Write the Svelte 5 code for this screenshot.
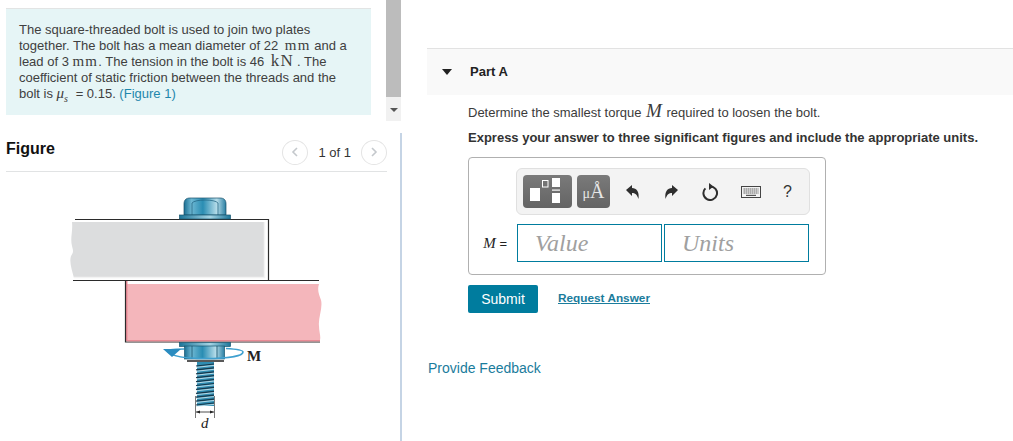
<script>
  const threads = Array.from({ length: 11 }, (_, i) => 364 + i * 3.9);
</script>

<div class="page">
  <section class="left">
    <div class="top">
      <div class="intro-wrap">
        <div class="intro">
          The square-threaded bolt is used to join two plates together. The bolt has a mean diameter of 22 <span class="unit gap">mm</span> and a lead of 3 <span class="unit">mm</span>. The tension in the bolt is 46 <span class="unit big gap">kN</span>. The coefficient of static friction between the threads and the bolt is <span class="mu">μ<sub>s</sub></span> = 0.15. <span class="link">(Figure 1)</span>
        </div>
      </div>
      <div class="scrollbar">
        <div class="thumb"></div>
        <div class="arrow-down"></div>
      </div>
    </div>
    <div class="figure">
      <div class="fig-head">
        <h2>Figure</h2>
        <div class="pager">
          <span class="circle"><svg viewBox="0 0 10 14" width="8" height="12"><path d="M7.5 2 L2.5 7 L7.5 12" /></svg></span>
          <span class="count">1 of 1</span>
          <span class="circle"><svg viewBox="0 0 10 14" width="8" height="12"><path d="M2.5 2 L7.5 7 L2.5 12" /></svg></span>
        </div>
      </div>
      <svg class="diagram" viewBox="60 172 280 269" width="280" height="269">
        <defs>
          <linearGradient id="steel" x1="0" x2="1" y1="0" y2="0">
            <stop offset="0" stop-color="#1b6f93" />
            <stop offset="0.18" stop-color="#6db7d2" />
            <stop offset="0.45" stop-color="#2a8db3" />
            <stop offset="0.78" stop-color="#b5dce9" />
            <stop offset="1" stop-color="#2a7fa3" />
          </linearGradient>
          <linearGradient id="flange" x1="0" x2="1" y1="0" y2="0">
            <stop offset="0" stop-color="#1c7599" />
            <stop offset="0.6" stop-color="#a6d5e5" />
            <stop offset="1" stop-color="#1c7599" />
          </linearGradient>
        </defs>

        <path d="M72 222 H264 V278 H74 C72 270 69 262 71 256 C74 252 73 250 72 246 C70 238 73 232 72 222Z" fill="#dcddde" />
        <path d="M264.5 222 V277.5 H74" fill="none" stroke="#f3f3f3" stroke-width="1.5" />
        <path d="M75 219.5 H268.5 V280" fill="none" stroke="#2b2b2b" stroke-width="1.2" />
        <path d="M73 280.5 H319" fill="none" stroke="#2b2b2b" stroke-width="1.2" />

        <path d="M127 284 H319 C317 290 319 295 321 300 C323 308 318 318 319 326 C319 332 321 336 320 340 H127Z" fill="#f4b6bb" />
        <rect x="126" y="281" width="1.5" height="60" fill="#ec8c97" />
        <path d="M125.5 280.5 V342 H320" fill="none" stroke="#2b2b2b" stroke-width="1.2" />
        <rect x="127" y="340" width="193" height="1.4" fill="#e98a95" />

        <path d="M184 215 V204 C184 200 186 198 190 198 H220 C224 198 226 200 226 204 V215Z" fill="url(#steel)" stroke="#174f68" stroke-width="0.7" />
        <path d="M192 215 V203 C195 199 215 199 218 203 V215" fill="none" stroke="#1d5f7c" stroke-width="0.7" />
        <rect x="179.5" y="215" width="51" height="4" fill="url(#flange)" stroke="#17566f" stroke-width="0.7" />

        <rect x="179.5" y="342.5" width="51" height="4" fill="url(#flange)" stroke="#17566f" stroke-width="0.7" />
        <rect x="184.5" y="346" width="40" height="13" fill="url(#steel)" stroke="#17566f" stroke-width="0.7" />
        <path d="M192 346 V359 M217 346 V359" stroke="#15506a" stroke-width="0.8" />
        <path d="M187 361 H224" stroke="#222" stroke-width="1.4" />

        <rect x="197" y="362" width="17" height="44" fill="#2f8db2" />
        {#each threads as y}
          <path d="M196 {y + 2} L214 {y}" stroke="#17384a" stroke-width="1.2" />
          <path d="M196 {y + 3.4} L214 {y + 1.4}" stroke="#d9ecf2" stroke-width="0.8" />
        {/each}

        <path d="M184 349 C172 349 166 350 168 352 C172 356 182 358.5 205 358.5 C228 358.5 243 356 243 352 C243 350 235 349 226 348.5" fill="none" stroke="#3fa0cf" stroke-width="1.6" />
        <path d="M163 349 L181 349 L172 357Z" fill="#2a8cc0" />

        <path d="M195.5 396 V418 M214.5 396 V418" stroke="#555" stroke-width="0.8" />
        <path d="M196 412 H214" stroke="#222" stroke-width="0.8" />
        <path d="M196 412 L200 410.5 V413.5Z M214 412 L210 410.5 V413.5Z" fill="#222" />
        <text x="247" y="361" class="m">M</text>
        <text x="201" y="428" class="d">d</text>
      </svg>
    </div>
  </section>

  <section class="right">
    <div class="part-head">
      <span class="tri"></span>
      <span class="part">Part A</span>
    </div>
    <div class="body">
      <p class="q">Determine the smallest torque <i class="mathm">M</i> required to loosen the bolt.</p>
      <p class="em">Express your answer to three significant figures and include the appropriate units.</p>
      <div class="answer">
        <div class="toolbar">
          <div class="btn wide">
            <svg viewBox="0 0 49 33" width="49" height="33">
              <rect x="7" y="13" width="10" height="13" fill="#fff" />
              <rect x="19.5" y="5.5" width="5.5" height="6.5" fill="none" stroke="#fff" stroke-width="1" />
              <rect x="29" y="3" width="8" height="9" fill="#fff" />
              <rect x="29" y="14.5" width="8" height="1.2" fill="#fff" />
              <rect x="29" y="18" width="8" height="10" fill="#fff" />
            </svg>
          </div>
          <div class="btn units"><span class="mic">μ</span><span class="ang">Å</span></div>
          <div class="tools">
            <svg viewBox="0 0 16 16" width="16" height="16"><path class="solid" d="M1 6 L7 1 V4 C11.5 4 14.5 7.5 13.5 15 C12 10.5 10 9 7 9 V12Z" /></svg>
            <svg viewBox="0 0 16 16" width="16" height="16"><path class="solid" d="M15 6 L9 1 V4 C4.5 4 1.5 7.5 2.5 15 C4 10.5 6 9 9 9 V12Z" /></svg>
            <svg viewBox="0 0 18 18" width="18" height="18"><path class="ring" d="M4.4 5.4 A6.8 6.8 0 1 0 9 3.4" /><path class="solid" d="M8 0 L8 7 L12.5 3.5Z" /></svg>
            <svg viewBox="0 0 20 12" width="20" height="12"><rect x="0.5" y="0.5" width="19" height="11" fill="#f3f3f3" stroke="#444" /><path d="M2.5 3 H17.5 M2.5 5 H17.5 M2.5 7 H17.5" stroke="#555" stroke-width="1.2" stroke-dasharray="1.4 0.6" /><path d="M5 9.4 H15" stroke="#555" stroke-width="1.2" /></svg>
            <span class="help">?</span>
          </div>
        </div>
        <div class="inputs">
          <span class="label"><i>M</i> <b>=</b></span>
          <div class="field">Value</div>
          <div class="field">Units</div>
        </div>
      </div>
      <div class="actions">
        <div class="submit">Submit</div>
        <span class="request">Request Answer</span>
      </div>
    </div>
    <div class="feedback">Provide Feedback</div>
  </section>
</div>

<style>
  :global(body) {
    margin: 0;
    background: #fff;
  }
  .page {
    display: flex;
    width: 1013px;
    height: 441px;
    overflow: hidden;
    font-family: "Liberation Sans", Arial, sans-serif;
    color: #333;
  }
  .left {
    width: 402px;
    flex: none;
    display: flex;
    flex-direction: column;
  }
  .top {
    display: flex;
    height: 121px;
    padding-left: 6px;
    justify-content: space-between;
    margin-right: 1px;
  }
  .intro-wrap {
    padding-top: 8px;
  }
  .intro {
    box-sizing: border-box;
    width: 365px;
    height: 107px;
    padding: 13px 19px 0 13px;
    background: #e6f5f6;
    border-top: 1px solid #e2e4e4;
    font-size: 13px;
    line-height: 16px;
    color: #404040;
  }
  .unit {
    font-family: "Liberation Serif", serif;
    font-size: 15px;
    letter-spacing: 1.2px;
    line-height: 0;
  }
  .unit.gap {
    margin-left: 3px;
  }
  .unit.big {
    font-size: 17px;
    margin-right: 3px;
  }
  .mu {
    font-family: "Liberation Serif", serif;
    font-style: italic;
    font-size: 15px;
    line-height: 0;
    margin-right: 4px;
  }
  .mu sub {
    font-size: 10px;
    line-height: 0;
  }
  .link {
    color: #1f87ac;
  }
  .scrollbar {
    width: 15px;
    background: #f1f1f1;
    display: flex;
    flex-direction: column;
    align-items: center;
    justify-content: space-between;
    padding-bottom: 5px;
    box-sizing: border-box;
  }
  .thumb {
    width: 100%;
    height: 97px;
    background: #bcbcbc;
  }
  .arrow-down {
    width: 0;
    height: 0;
    border-left: 4px solid transparent;
    border-right: 4px solid transparent;
    border-top: 4px solid #555;
    margin-bottom: 4px;
  }
  .figure {
    flex: 1;
    margin-top: 12px;
    padding-left: 6px;
    border-right: 2px solid #c5d4e5;
    min-height: 0;
  }
  .fig-head {
    display: flex;
    justify-content: space-between;
    align-items: center;
    width: 381px;
    height: 39px;
    box-sizing: border-box;
    border-bottom: 1px solid #e1e3e4;
    padding-bottom: 7px;
  }
  h2 {
    margin: 0;
    font-size: 16px;
    font-weight: bold;
    color: #111;
  }
  .pager {
    display: flex;
    align-items: center;
    gap: 10px;
    margin-top: 7px;
    font-size: 13px;
    color: #333;
  }
  .count {
    padding-top: 1px;
  }
  .circle {
    box-sizing: border-box;
    width: 26px;
    height: 25px;
    border-radius: 50%;
    border: 1px solid #e4e4e4;
    display: flex;
    align-items: center;
    justify-content: center;
  }
  .circle path {
    fill: none;
    stroke: #c4c8cc;
    stroke-width: 2;
  }
  .diagram {
    display: block;
    margin-left: 54px;
  }
  .m {
    font-family: "Liberation Serif", serif;
    font-weight: bold;
    font-size: 15px;
    fill: #222;
  }
  .d {
    font-family: "Liberation Serif", serif;
    font-style: italic;
    font-size: 15px;
    fill: #222;
  }
  .right {
    flex: 1;
    padding: 48px 0 0 25px;
    min-width: 0;
  }
  .part-head {
    display: flex;
    align-items: center;
    height: 46px;
    border-top: 1px solid #e2e2e2;
    background: #f9f9f9;
    font-weight: bold;
    font-size: 13px;
    color: #222;
  }
  .part {
    margin-bottom: 2px;
  }
  .tri {
    width: 0;
    height: 0;
    margin-left: 15px;
    border-left: 5.5px solid transparent;
    border-right: 5.5px solid transparent;
    border-top: 6px solid #222;
    margin-right: 18px;
  }
  .body {
    padding-left: 41px;
  }
  p {
    margin: 0;
  }
  .q {
    font-size: 13px;
    line-height: 16px;
    margin-top: 10px;
    color: #3b3b3b;
  }
  .mathm {
    font-family: "Liberation Serif", serif;
    font-size: 19px;
    line-height: 0;
    margin: 0 1px;
  }
  .em {
    font-size: 13px;
    line-height: 16px;
    margin-top: 9px;
    font-weight: bold;
    color: #333;
  }
  .answer {
    box-sizing: border-box;
    width: 358px;
    height: 118px;
    margin-top: 11px;
    border: 1px solid #b0b0b0;
    border-radius: 4px;
    padding: 10px 16px 0 12px;
  }
  .toolbar {
    box-sizing: border-box;
    display: flex;
    align-items: center;
    width: 294px;
    height: 47px;
    margin-left: 35px;
    padding: 0 6px;
    gap: 5px;
    background: #f3f3f3;
    border: 1px solid #e0e0e0;
    border-radius: 6px;
  }
  .btn {
    height: 33px;
    border-radius: 4px;
    background: linear-gradient(#7a7a7a, #646464);
    display: flex;
    align-items: center;
    justify-content: center;
  }
  .wide {
    width: 49px;
  }
  .units {
    width: 33px;
    color: #e6e6e6;
    font-family: "Liberation Serif", serif;
    align-items: baseline;
  }
  .mic {
    font-size: 14px;
    line-height: 33px;
  }
  .ang {
    font-size: 20px;
    line-height: 33px;
  }
  .tools {
    flex: 1;
    display: flex;
    align-items: center;
    justify-content: space-between;
    padding: 0 11px 0 10px;
  }
  .solid {
    fill: #2e2e2e;
  }
  .ring {
    fill: none;
    stroke: #2e2e2e;
    stroke-width: 2;
  }
  .help {
    font-size: 16px;
    color: #333;
  }
  .inputs {
    display: flex;
    align-items: center;
    margin-top: 9px;
    gap: 2px;
  }
  .label {
    width: 34px;
    box-sizing: border-box;
    flex: none;
    text-align: right;
    padding-right: 8px;
    white-space: nowrap;
    font-size: 13px;
    color: #222;
  }
  .label i {
    font-family: "Liberation Serif", serif;
    font-size: 15px;
  }
  .label b {
    font-weight: normal;
  }
  .field {
    box-sizing: border-box;
    width: 145px;
    height: 38px;
    border: 1px solid #007c9e;
    padding-left: 17px;
    font-family: "Liberation Serif", serif;
    font-style: italic;
    font-size: 24px;
    line-height: 37px;
    color: #a0a0a0;
  }
  .actions {
    display: flex;
    align-items: center;
    gap: 20px;
    margin-top: 10px;
  }
  .submit {
    width: 70px;
    height: 28px;
    background: #007c9e;
    border-radius: 2px;
    color: #fff;
    font-size: 14px;
    line-height: 28px;
    text-align: center;
  }
  .request {
    font-size: 11.8px;
    font-weight: bold;
    color: #1a7c9c;
    text-decoration: underline;
    margin-bottom: 2px;
  }
  .feedback {
    margin-top: 47px;
    padding-left: 1px;
    font-size: 14px;
    color: #1a7c9c;
  }
</style>
